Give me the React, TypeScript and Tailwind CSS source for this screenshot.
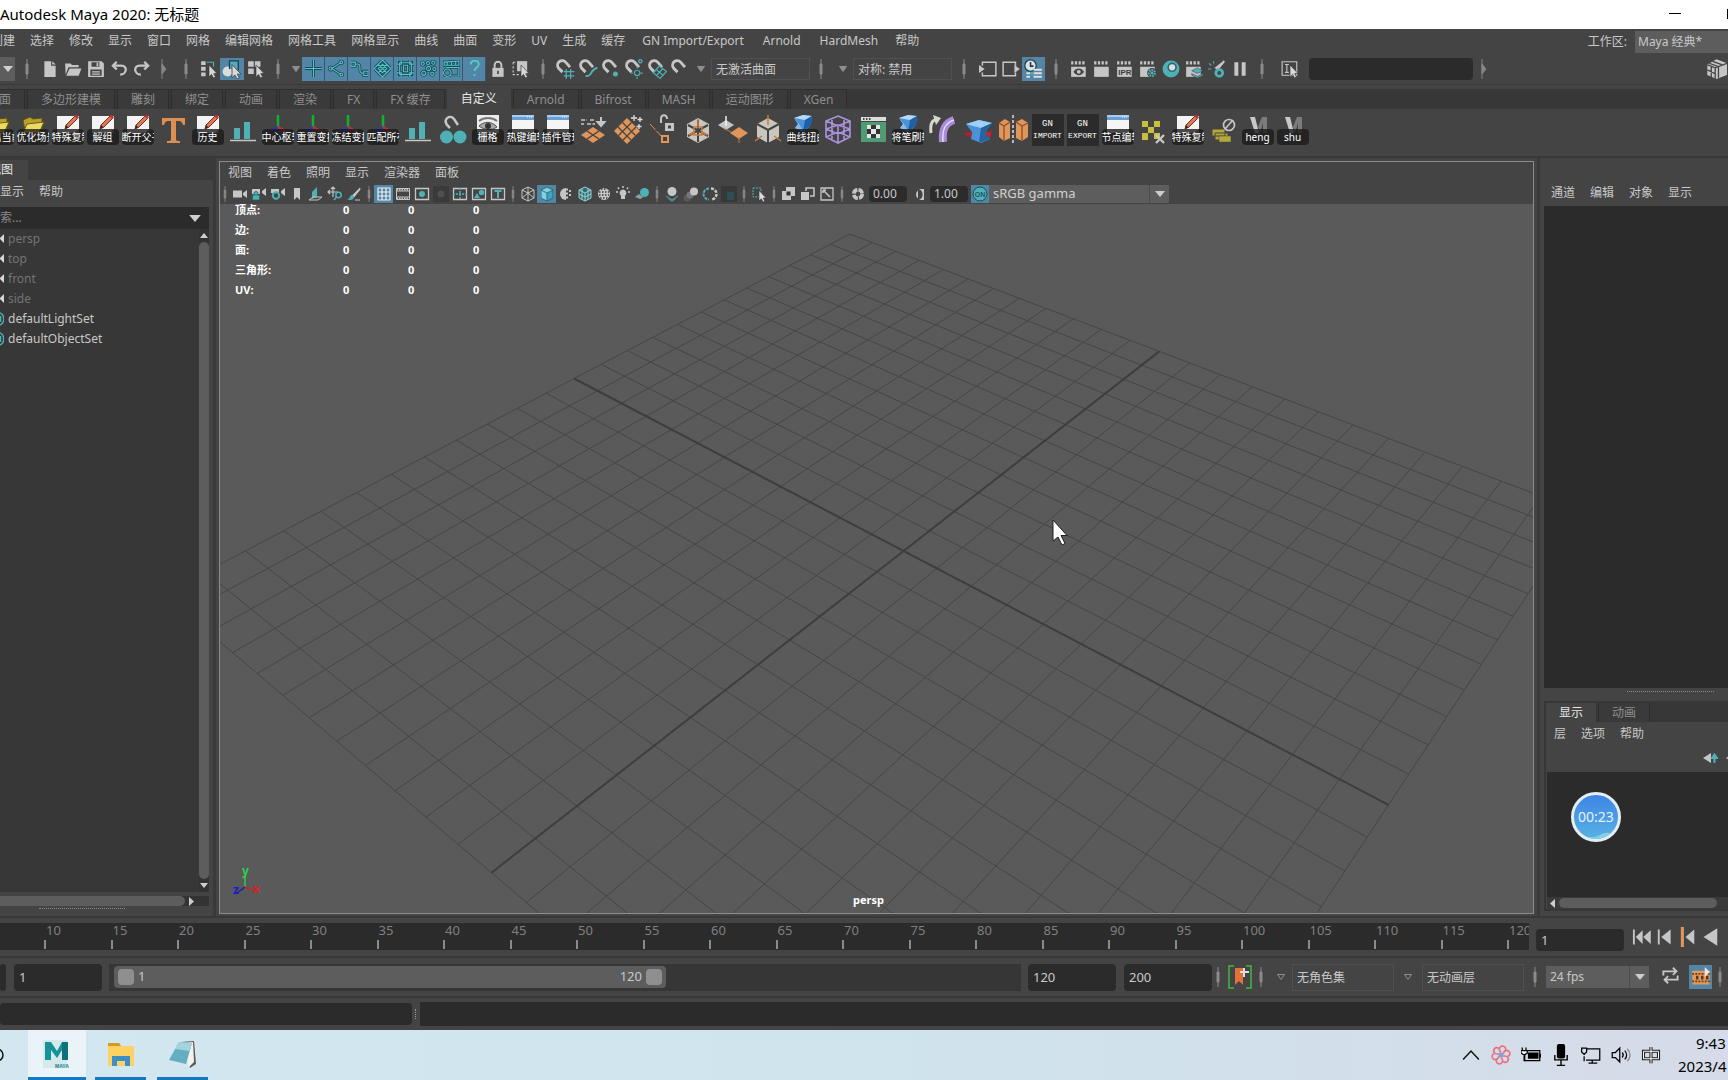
import React from "react";
import type { ReactNode } from "react";

const TEAL = "#4fb0b5";
const LIGHT = "#c6c6c6";
const ORANGE = "#e0955a";

/* ---------- small building blocks ---------- */

function Svg({ size = 16, box = 16, children }: { size?: number; box?: number; children: ReactNode }) {
  return (
    <svg width={size} height={size} viewBox={`0 0 ${box} ${box}`} fill="none" aria-hidden="true" className="block shrink-0">
      {children}
    </svg>
  );
}

function Caret({ className = "" }: { className?: string }) {
  return (
    <svg width="10" height="6" viewBox="0 0 10 6" className={className} aria-hidden="true">
      <path d="M0 0h10L5 6z" fill="#cfcfcf" />
    </svg>
  );
}

function Tool({ label, on = false, className = "w-[23px] h-[22px]", children }: { label: string; on?: boolean; className?: string; children: ReactNode }) {
  return (
    <button type="button" aria-label={label} className={`flex shrink-0 items-center justify-center ${on ? "bg-[#5285a6]" : ""} ${className}`}>
      {children}
    </button>
  );
}

function Sep({ className = "w-[22px] h-[22px]", arrow = false }: { className?: string; arrow?: boolean }) {
  return (
    <span className={`flex shrink-0 items-center justify-center ${className}`} aria-hidden="true">
      <svg width="6" height="20" viewBox="0 0 6 20" className="h-full">
        {arrow ? <path d="M1 0v20M1 5l4 5-4 5z" stroke="#858585" fill="#858585" /> : <path d="M3 0v20M2 5h2v10h-2z" stroke="#8a8a8a" fill="#8a8a8a" />}
      </svg>
    </span>
  );
}

function MiniCaret({ className, outline = false }: { className: string; outline?: boolean }) {
  return (
    <button type="button" aria-label="选项菜单" className={`flex shrink-0 items-center justify-center ${className}`}>
      <svg width="8" height="6" viewBox="0 0 8 6">
        <path d="M.5.5h7L4 5.5z" fill={outline ? "none" : "#8f8f8f"} stroke="#8f8f8f" />
      </svg>
    </button>
  );
}

function Combo({ label, value, className }: { label: string; value: string; className: string }) {
  return (
    <span className={`relative flex shrink-0 items-center bg-[#5d5d5d] ${className}`}>
      <select aria-label={label} defaultValue={value} className="h-full w-full appearance-none bg-transparent pl-1 outline-none">
        <option>{value}</option>
      </select>
      <Caret className="pointer-events-none absolute right-1" />
      <span className="pointer-events-none absolute inset-y-0 right-[19px] w-px bg-[#4b4b4b]" />
    </span>
  );
}

function Field({ label, value, className }: { label: string; value: string; className: string }) {
  return <input aria-label={label} defaultValue={value} className={`shrink-0 rounded-sm bg-[#2b2b2b] text-[#c8c8c8] outline-none ${className}`} />;
}

const cursor = <path d="M8 4.500v10.500l2.300-2.200 1.700 3.200 1.800-.9-1.600-3h3z" fill="#d8d8d8" stroke="#3a3a3a" strokeWidth=".6" />;
const clapper = (
  <>
    <path d="M1 2.500h13" stroke={LIGHT} strokeWidth="3" strokeDasharray="2 1.300" />
    <path d="M1 6h13v9H1z" fill={LIGHT} />
  </>
);
const magnet = <path d="M6 10.500L2.800 7.200A3.700 3.700 0 0 1 8.500 2.500L12 6.500" stroke={LIGHT} strokeWidth="2.300" />;
const cubeLines = "M8 1l6 3v8l-6 3-6-3V4zM2 4l6 3 6-3M8 7v8";

/* ---------- status line ---------- */

const fileIcons: [string, ReactNode][] = [
  ["新建场景", <path d="M3 1h6v4h4v10H3zM10 1l3 3h-3z" fill={LIGHT} />],
  ["打开场景", <path d="M1 3h5l1 1.500h6v2H4L1.500 13zM5 7.500h10.500L13 14H2z" fill={LIGHT} />],
  ["保存场景", <path fillRule="evenodd" d="M1 1h12l2 2v12H1zM4 2v4h7V2zM3 8.500v5.500h10V8.500zM8.500 2.500v3H10v-3zM4.500 10h7v1h-7zM4.500 12h7v1h-7z" fill={LIGHT} />],
  ["撤消", <path d="M3 5h7c6 0 5 8-1 8M6 1.500L2.500 5 6 8.500" stroke={LIGHT} strokeWidth="2" />],
  ["重做", <path d="M13 5H6c-6 0-5 8 1 8M10 1.500L13.500 5 10 8.500" stroke={LIGHT} strokeWidth="2" />],
];

const maskIcons: [string, ReactNode][] = [
  ["控制柄", <path d="M8 0v16M0 8h16" />],
  ["关节", <path d="M12 2.500L3.500 8l8.500 5.500M12.500 1a1.300 1.300 0 1 0 .1 0M2.500 6.500a1.500 1.500 0 1 0 .1 0M12.500 12.500a1.300 1.300 0 1 0 .1 0" />],
  ["曲线", <path d="M0 2h4v4H0zM12 10.500h4v4h-4zM4 4c9-2 0 8.500 8 8.500" />],
  ["曲面", <path d="M8 0l8 8-8 8-8-8zM8 4l4 4-4 4-4-4zM4 4l8 8M12 4l-8 8" />],
  ["变形", <path d="M2.500 2.500h11v11h-11zM0 0h4v4H0zM12 0h4v4h-4zM0 12h4v4H0zM12 12h4v4h-4zM6 5h4v6H6z" />],
  ["动力学", <path d="M2.500 2a1.500 1.500 0 1 0 .1 0M8 6a2 2 0 1 0 .1 0M12.500 1a1.500 1.500 0 1 0 .1 0M13.500 7a1.500 1.500 0 1 0 .1 0M3.500 10.500a2 2 0 1 0 .1 0M11.500 11.500a1.500 1.500 0 1 0 .1 0M7.500 1.500a1.500 1.500 0 1 0 .1 0" />],
  ["渲染", <path d="M1 2l14-1v4H1zM4 2v3M8 1.500v3M12 1.500v3M3 7h12v8H7M4 8.500a3.500 3.500 0 1 0 .1 0" />],
  ["杂项", <path d="M4.500 4.500c0-5 7.500-5 7.500-.5 0 3-4 3-4 6.500M8 13v2.500" strokeWidth="2.400" />],
];

const snapIcons: [string, ReactNode][] = [
  ["捕捉到栅格", <path d="M9 8v8M12.500 8v8M7 10h8.500M7 13.500h8.500" stroke={TEAL} />],
  ["捕捉到曲线", <path d="M6 13.500c6 1 3-5 9.500-6.500" stroke={TEAL} strokeWidth="1.500" />],
  ["捕捉到点", <circle cx="11.500" cy="12" r="2" fill={TEAL} />],
  ["捕捉到投影中心", <path d="M13 .5a1.300 1.300 0 1 0 .1 0M10.500 9a2.200 2.200 0 1 0 .1 0M10.500 6v1.500M10.500 14.500v1.500M13.500 11.300h1.500M5.500 11.300h1.500" stroke={TEAL} />],
  ["捕捉到视图平面", <path d="M10 5.500l5.500 4.500-5 5.500L5 11zM7.500 13.300l5-5.500M7.500 8.500l5 4.300" stroke={TEAL} />],
  ["激活选定对象", null],
];

const renderIcons: [string, ReactNode][] = [
  ["渲染视图", <>{clapper}<path d="M3 10.500c2.500-4 7-4 9.500 0-2.500 4-7 4-9.500 0z" fill="#444" /><circle cx="7.800" cy="10.500" r="1.700" fill={LIGHT} /></>],
  ["渲染当前帧", clapper],
  ["IPR", <>{clapper}<text x="2" y="13.500" fontSize="7" fontWeight="700" fill="#3c3c3c" fontFamily="Liberation Sans">IPR</text></>],
  ["渲染设置", <>{clapper}<circle cx="11.500" cy="11.500" r="4.300" fill="#444" /><circle cx="11.500" cy="11.500" r="2.600" stroke={TEAL} strokeWidth="2" strokeDasharray="1.500 .8" /><circle cx="11.500" cy="11.500" r="1.200" fill={TEAL} /></>],
  ["材质查看器", <><circle cx="8" cy="8" r="7.500" fill={TEAL} /><circle cx="9" cy="6.500" r="3.500" fill="#e0e0e0" stroke="#2d6c76" strokeWidth="1.500" /></>],
  ["渲染序列", <>{clapper}<path d="M11 7l5 2.500-5 2.500-5-2.500zM6 12l5 2.500 5-2.500v1.500L11 16l-5-2.500z" fill={TEAL} stroke="#444" strokeWidth=".5" /></>],
  ["灯光编辑器", <><path d="M14.500 1L9 8 7 7z" fill={LIGHT} stroke={LIGHT} strokeWidth="1.500" /><path d="M1 3l2 2M5 1v2M0 8h3" stroke={TEAL} /><circle cx="10" cy="11.500" r="3" stroke={TEAL} strokeWidth="2.500" /></>],
  ["暂停", <path d="M3 2h3.500v12H3zM9.500 2H13v12H9.500z" fill={LIGHT} />],
];

function StatusLine() {
  return (
    <div className="flex h-8 shrink-0 items-center overflow-hidden border-b border-[#3a3a3a]">
      <button type="button" aria-label="菜单集" className="flex h-6 w-[15px] shrink-0 items-center justify-center bg-[#5d5d5d]"><Caret /></button>
      <Sep className="h-[22px] w-[23px]" />
      {fileIcons.map(([n, d]) => <Tool key={n} label={n}><Svg size={18}>{d}</Svg></Tool>)}
      <Sep arrow />
      <Sep />
      <Tool label="按层次选择"><Svg size={18}><path d="M1 1h4v3.500H1zM1 6h4v3.500H1zM1 11h4v3.500H1z" fill={LIGHT} /><path d="M6 2h6v4" stroke={TEAL} />{cursor}</Svg></Tool>
      <Tool label="按对象选择" on className="h-[22px] w-6"><Svg size={20}><circle cx="4.500" cy="10" r="4" fill="#dcdcdc" /><path d="M6 8V1.500h7V9" stroke="#10424f" fill="#5ea7bb" />{cursor}</Svg></Tool>
      <Tool label="按组件选择"><Svg size={18}><path d="M1 1h5v5H1zM7 1h5v5H7zM1 7.500h5v5H1z" fill={LIGHT} />{cursor}</Svg></Tool>
      <Sep />
      <MiniCaret className="h-[22px] w-[13px]" />
      {maskIcons.map(([n, d]) => (
        <Tool key={n} label={n} on className="h-6 w-[23px] border-r border-[#36576c]">
          <Svg size={17}>
            <g stroke="#174b59" strokeWidth="2.600">{d}</g>
            <g stroke="#5cc0c4" strokeWidth="1">{d}</g>
          </Svg>
        </Tool>
      ))}
      <Tool label="锁定当前选择"><Svg size={18}><path d="M5 7V4.500a3 3 0 0 1 6 0V7" stroke={LIGHT} strokeWidth="1.700" /><path d="M3 7h10v8H3z" fill={LIGHT} /><path d="M8 9.500v3" stroke="#444" strokeWidth="1.500" /></Svg></Tool>
      <Tool label="高亮显示选择模式"><Svg size={18}><path d="M1 2h3M1 2v11h6" stroke={LIGHT} strokeDasharray="2 1.500" /><path d="M4.500 1h9v9h-9z" fill={LIGHT} />{cursor}</Svg></Tool>
      <Sep className="h-[22px] w-[21px]" />
      {snapIcons.map(([n, d]) => <Tool key={n} label={n}><Svg size={20}>{magnet}{d}</Svg></Tool>)}
      <MiniCaret className="h-[22px] w-5" />
      <input aria-label="激活曲面" defaultValue="无激活曲面" className="h-[22px] w-[99px] shrink-0 border border-[#505050] bg-transparent px-1 outline-none" />
      <Sep />
      <MiniCaret className="h-[22px] w-[21px]" />
      <input aria-label="对称" defaultValue="对称: 禁用" className="h-[22px] w-[99px] shrink-0 border border-[#505050] bg-transparent px-1 outline-none" />
      <Sep className="h-[22px] w-6" />
      <Tool label="输入连接"><Svg size={18}><path d="M3 5V2h12v12H3v-3" stroke={LIGHT} strokeWidth="1.300" /><path d="M0 4.500L5 8l-5 3.500z" fill={LIGHT} /></Svg></Tool>
      <Tool label="输出连接"><Svg size={18}><path d="M12 5V2H1v12h11v-3" stroke={LIGHT} strokeWidth="1.300" /><path d="M11 4.500L16 8l-5 3.500z" fill={LIGHT} /></Svg></Tool>
      <Tool label="构建历史" on className="h-6 w-[23px]"><Svg size={19}><circle cx="5.500" cy="5.500" r="4.800" fill="#e0e0e0" stroke="#173b4c" /><path d="M5.500 2.500v3.500H8" stroke="#173b4c" strokeWidth="1.300" /><path d="M8 9h7M8 12h7M8 15h7M2 12h3M2 15h3" stroke="#e0e0e0" strokeWidth="1.600" /><circle cx="7" cy="12" r="1.500" fill={TEAL} /></Svg></Tool>
      <Sep />
      {renderIcons.map(([n, d]) => <Tool key={n} label={n}><Svg size={18}>{d}</Svg></Tool>)}
      <Sep />
      <Tool label="输入行操作" className="h-[22px] w-[34px]"><Svg size={18}><path d="M1 1.500h13v12H1z" stroke={LIGHT} /><path d="M3.500 4H7M5.200 4v7M3.500 11H7" stroke={LIGHT} />{cursor}</Svg></Tool>
      <Field label="按名称选择" value="" className="ml-0.5 h-[22px] w-[164px] px-1" />
      <Sep arrow />
      <span className="grow" />
      <Tool label="建模工具包"><Svg size={21}><path d="M1 5l7-4 8 3v9l-8 3-7-3z" fill={LIGHT} /><path d="M1 5l6 2.500L16 4M7 7.500V16M1 9l6 3M4 6v9M9.500 7v8M2.500 4l7 2.500M5 2.500L12 5" stroke="#444" /></Svg></Tool>
    </div>
  );
}

/* ---------- shelf ---------- */

const tabs = ["曲面", "多边形建模", "雕刻", "绑定", "动画", "渲染", "FX", "FX 缓存", "自定义", "Arnold", "Bifrost", "MASH", "运动图形", "XGen"];

const noteIcon = (
  <>
    <path d="M5 2h22v17H5z" fill="#f3f3f3" />
    <path d="M23 19l4-4v4z" fill="#888" />
    <path d="M13 15l1-4 9-9 3 2-9 9z" fill="#d97a55" stroke="#7a2a20" />
    <path d="M22 2.500l2-2 3 2.500-1.500 2z" fill="#c0343a" />
    <path d="M13 15l1-4 2.500 2.500z" fill="#2c2c2c" />
  </>
);
const axisIcon = (
  <g strokeWidth="2.500">
    <path d="M16 1v12" stroke="#12b02a" />
    <path d="M16 13l-9 5" stroke="#2a35c8" />
    <path d="M16 13l9 5" stroke="#c8283a" />
  </g>
);
const barsFull = <><path d="M7 14h6v11H7zM17 8h6v17h-6z" fill={TEAL} /><path d="M3 26.500h26" stroke={LIGHT} strokeWidth="1.500" /></>;
const windowIcon = <><path d="M5 1h22v18H5z" fill="#f5f5f5" /><path d="M5 1h22v5H5z" fill="#6a9fd6" /><path d="M5 1h22v2H5z" fill="#a9cdef" /><path d="M20 3h5" stroke="#fff" strokeDasharray="1 1" /></>;
const folderFull = (
  <>
    <path d="M6 6l7-3 3 2 9-1v11l-6 5-11-3z" fill="#b9a02c" stroke="#5f5212" />
    <path d="M6 19l4-9 17-2-5 11z" fill="#ecd961" stroke="#6d5e14" />
  </>
);
const blueGem = <><path d="M7 4l9-3 9 1-1 9-7 7-9-4 3-4z" fill="#4b92d8" /><path d="M7 4l11 2 7-4-9-1z" fill="#b5daf7" /><path d="M18 6l-2 12 8-7 1-9z" fill="#1f5fa8" /><path d="M7 4l4 6-3 4 9 4-5-8z" fill="#86bdec" /></>;
const mIcon = <><path d="M8 3h5l4 16h-4z" fill="#c9c9c9" /><path d="M20 3h5v16h-4V9l-3 10-2-6z" fill="#7b7b7b" /></>;
const greyCube = <path d="M16 4l11 6v13l-11 6-11-6V10z" fill="#c9c6c0" />;

type ShelfItem = { id: string; label?: string; art: ReactNode; text?: [string, string] };

const shelf: ShelfItem[] = [
  { id: "exp", label: "导出当前", art: folderFull },
  { id: "opt", label: "优化场景", art: folderFull },
  { id: "dup", label: "特殊复制", art: noteIcon },
  { id: "ungroup", label: "解组", art: noteIcon },
  { id: "unparent", label: "断开父子", art: noteIcon },
  { id: "type", art: <path d="M5 4h23v7h-2c-1-3-2-4-4-4h-3v18c0 2 1 2 4 2v2H10v-2c3 0 4 0 4-2V7h-3c-2 0-3 1-4 4H5z" fill="#dd8f52" /> },
  { id: "hist", label: "历史", art: noteIcon },
  { id: "bars1", art: barsFull },
  { id: "pivot", label: "中心枢轴", art: axisIcon },
  { id: "reset", label: "重置变换", art: axisIcon },
  { id: "freeze", label: "冻结变换", art: axisIcon },
  { id: "match", label: "匹配所有", art: axisIcon },
  { id: "bars2", art: barsFull },
  { id: "snap", art: <><path d="M13 14l-3-3C6 5 13 0 17 5l4 6" stroke={LIGHT} strokeWidth="2.500" /><circle cx="9.500" cy="23" r="6.500" fill={TEAL} /><circle cx="23" cy="23" r="6.500" fill={TEAL} /></> },
  { id: "grid", label: "栅格", art: <><path d="M5 1h22v18H5z" fill="#ececec" /><path d="M7 7c5-4 13-4 18 0" stroke="#777" strokeWidth="2" /><path d="M7 12c5-5 13-5 18 1-6 4-13 3-18-1z" fill="#a8a8a8" stroke="#555" /><circle cx="16" cy="12" r="3" fill="#333" /></> },
  { id: "hotkey", label: "热键编辑", art: windowIcon },
  { id: "plugin", label: "插件管理", art: windowIcon },
  { id: "smooth", art: <><path d="M4 6h6M13 6h5M4 10h3M10 10h8" stroke={LIGHT} strokeWidth="1.700" strokeDasharray="4 1.500" /><path d="M24 3v5M20.500 8h7l-3.500 4z" stroke={LIGHT} fill={LIGHT} strokeWidth="2" /><path d="M16 13l12 8-12 8-12-8z" fill={ORANGE} /><path d="M10 17l12 8M22 17l-12 8" stroke="#444" strokeWidth="1.500" /></> },
  { id: "retopo", art: <><path d="M15 4l13 13-13 13L2 17z" fill={ORANGE} /><path d="M10.500 8.500l13 13M6 13l13 13M19.500 8.500l-13 13M24 13L11 26" stroke="#444" strokeWidth="1.300" /><path d="M22 1v6M19 4h6M28 3v5M25.500 5.500h5M27 10v5M24.500 12.500h5" stroke="#ddd" strokeWidth="1.300" /></> },
  { id: "unlock", art: <><path d="M14 9V5c0-5 6-5 6 0" stroke={LIGHT} strokeWidth="2" /><path d="M18 9h9v8h-9z" fill={LIGHT} /><path d="M21 11.500h3v3h-3z" fill="#444" /><path d="M3 10l13 14" stroke={ORANGE} strokeDasharray="8 1.500" /><path d="M15 22h6v6h-6z" stroke={ORANGE} strokeWidth="2" /></> },
  { id: "cube1", art: <>{greyCube}<path d="M16 6v22M6 11l20 11M26 11L6 22" stroke="#444" strokeWidth="2" /><path d="M16 5v7M7 21l6-3M25 21l-6-3M12 13h8v8h-8z" stroke="#c67b3c" strokeWidth="1.500" /></> },
  { id: "plane", art: <><path d="M1 11l8-5 8 5-8 5z" fill={LIGHT} /><path d="M9 2v10" stroke="#eee" strokeWidth="1.500" /><path d="M13 19l9-6 9 6-9 6z" fill={ORANGE} /><path d="M22 23v6M6 14l8 4" stroke="#c67b3c" /></> },
  { id: "cube2", art: <>{greyCube}<path d="M5 10l11 6 11-6M16 16v13" stroke="#444" strokeWidth="2" /><path d="M16 1v10M3 27l7-5M29 27l-7-5" stroke="#c67b3c" strokeWidth="1.500" /></> },
  { id: "twist", label: "曲线扭曲", art: blueGem },
  { id: "lattice", art: <path d="M16 2l12 5v16l-12 6-12-6V7zM4 7l12 5 12-5M16 12v17M4 15l12 5 12-5M4 15l12-4 12 4M4 23l12-5 12 5M10 4.500v5M22 4.500v5M10 9.500v16.500M22 9.500v16.500" stroke="#ab92dc" strokeWidth="1.600" /> },
  { id: "checker", art: <><path d="M4 3h25v4H4z" fill="#dcdcdc" /><path d="M6 5h8" stroke="#444" strokeDasharray="1.500 1.500" strokeWidth="2" /><path d="M4 8h25v20H4z" fill="#4f9b74" /><path d="M10 11h13v13H10z" fill="#e5e5e5" /><path d="M14 11h5v4h-5zM10 15h4v5h-4zM19 15h4v5h-4zM14 20h5v4h-5z" fill="#333" /></> },
  { id: "brush", label: "将笔刷转", art: blueGem },
  { id: "bend", art: <><path d="M4 19C3 10 5 6 9 6" stroke="#d8d8d0" strokeWidth="3" /><path d="M6 1l8 3-5 7z" fill="#d8d8d0" /><path d="M16 28c-1-11 1-19 11-22" stroke="#a98bdc" strokeWidth="8" /><path d="M16 28c-1-11 1-19 11-22" stroke="#e6dcf8" strokeWidth="1.500" /></> },
  { id: "deform", art: <><path d="M2 20l7-3v7zM30 16l-8 5 6 3z" fill="#b3202c" /><path d="M4 10l13-4 13 3-6 8 4 8-9 4-10-4 1-7z" fill="#4b92d8" /><path d="M4 10l15 4 11-5-13-3z" fill="#9fd0f5" /><path d="M19 14l-2 15 11-4-4-8 6-8z" fill="#26649f" /><path d="M24 20h5M26.500 18v5" stroke="#d3202c" strokeWidth="2" /></> },
  { id: "split", art: <><path d="M2 9l6-4 5 3v16l-6 3-5-4zM19 8l6-3 6 4v14l-6 4-6-3z" fill={ORANGE} /><path d="M2 9l5 3 6-4M7 12v15M19 8l6 4 6-3M25 12v15" stroke="#8b5124" strokeWidth="1.300" /><path d="M16 1v28" stroke="#ddd" strokeDasharray="3 2" strokeWidth="1.500" /></> },
  { id: "gni", text: ["GN", "IMPORT"], art: null },
  { id: "gne", text: ["GN", "EXPORT"], art: null },
  { id: "node", label: "节点编辑", art: windowIcon },
  { id: "uv", art: <><path d="M5 7h6v6H5zM17 7h6v6h-6zM11 13h6v6h-6zM5 19h6v7H5zM17 19h6v6h-6z" fill="#c9bf3e" /><path d="M19 21l8 8M27 21l-8 8" stroke="#c9c9c9" strokeWidth="2.300" /></> },
  { id: "dup2", label: "特殊复制", art: noteIcon },
  { id: "layers", art: <><path d="M5 15h13v7H5zM8 19h13v7H8z" fill="#b4a938" stroke="#444" /><path d="M12 22h12v6H12z" fill="#b4a938" stroke="#444" strokeWidth=".5" /><circle cx="22" cy="11" r="5.500" stroke={LIGHT} strokeWidth="1.700" /><path d="M18 15l8-9" stroke={LIGHT} strokeWidth="1.700" /></> },
  { id: "heng", label: "heng", art: mIcon },
  { id: "shu", label: "shu", art: mIcon },
];

const longLabel = /[\u4e00-\u9fff]{4}/;

function Shelf() {
  return (
    <>
      <div role="tablist" className="mt-1 flex h-5 shrink-0 gap-0.5 overflow-hidden bg-[#373737]">
        {tabs.map((t, i) => (
          <button
            key={t}
            type="button"
            role="tab"
            aria-selected={t === "自定义"}
            className={`h-full shrink-0 whitespace-nowrap ${i === 0 ? "-ml-[27px]" : ""} ${t === "自定义" ? "bg-[#444444] px-3.5 text-[#e6e6e6]" : "border-x border-t border-[#2e2e2e] bg-[#3a3a3a] px-[13px] text-[#8f8f8f]"}`}
          >
            {t}
          </button>
        ))}
      </div>
      <div className="-ml-5 flex h-[49px] shrink-0 items-start overflow-hidden border-b-2 border-[#383838] pt-[5px]">
        {shelf.map((s) => (
          <button key={s.id} type="button" aria-label={s.label ?? s.id} className="flex w-[35px] shrink-0 justify-center">
            {s.text ? (
              <span className="flex h-8 w-8 flex-col items-center justify-center bg-[#2b2b2b] font-['Liberation_Mono'] text-[9px] leading-[11px] text-white">
                <span>{s.text[0]}</span>
                <span className="text-[8px]">{s.text[1]}</span>
              </span>
            ) : (
              <span className="grid w-8 grid-cols-1 grid-rows-1">
                <span className="col-start-1 row-start-1"><Svg size={32} box={32}>{s.art}</Svg></span>
                {s.label && (
                  <span className={`z-10 col-start-1 row-start-1 mt-[15px] flex h-4 overflow-hidden whitespace-nowrap rounded-sm bg-[#1c1c1ccc] text-[10px] leading-4 text-white ${longLabel.test(s.label) ? "" : "justify-center"}`}>
                    {s.label}
                  </span>
                )}
              </span>
            )}
          </button>
        ))}
      </div>
    </>
  );
}

/* ---------- outliner ---------- */

const nodes = [
  { name: "persp", set: false },
  { name: "top", set: false },
  { name: "front", set: false },
  { name: "side", set: false },
  { name: "defaultLightSet", set: true },
  { name: "defaultObjectSet", set: true },
];

function Dots({ className }: { className: string }) {
  return <div className={`h-0.5 border-t border-dotted border-[#8a8a8a] ${className}`} />;
}

function Outliner() {
  return (
    <aside className="flex w-[213px] shrink-0 flex-col overflow-hidden bg-[#444444]">
      <div className="flex h-[22px] items-end bg-[#3a3a3a]">
        <span className="flex h-5 w-7 items-center overflow-hidden whitespace-nowrap bg-[#444444] text-[#e6e6e6]"><span className="-ml-[35px]">大纲视图</span></span>
      </div>
      <nav className="flex h-[27px] items-center gap-[15px] pb-1">
        <button type="button">显示</button>
        <button type="button">帮助</button>
      </nav>
      <div className="mr-1 flex h-[22px] items-center justify-between bg-[#2b2b2b] pr-2">
        <input aria-label="搜索" placeholder="搜索..." className="-ml-3 w-40 bg-transparent placeholder:text-[#8a8a8a] outline-none" />
        <Caret className="h-[7px] w-3" />
      </div>
      <div className="mr-1 flex grow bg-[#373737]">
        <ul className="grow">
          {nodes.map((n) => (
            <li key={n.name} className={`flex h-5 items-center gap-1 ${n.set ? "text-[#c8c8c8]" : "text-[#747474]"}`}>
              <svg width="4" height="14" viewBox="0 0 4 14" aria-hidden="true">
                {n.set ? <path d="M0 1c5 2 5 10 0 12M.5 4v6" stroke={TEAL} fill="none" strokeWidth="1.500" /> : <path d="M4 2v9L0 7V6z" fill="#d8d8d8" />}
              </svg>
              {n.name}
            </li>
          ))}
        </ul>
        <div className="flex w-2.5 flex-col items-center gap-1 bg-[#333333] py-1">
          <Caret className="h-[5px] w-2 rotate-180" />
          <span className="w-2.5 grow rounded-md bg-[#5d5d5d]" />
          <Caret className="h-[5px] w-2" />
        </div>
      </div>
      <div className="mr-1 mt-1 flex h-2.5 items-center gap-1 bg-[#333333]">
        <span className="h-full w-[185px] rounded-r-md bg-[#5d5d5d]" />
        <svg width="5" height="9" viewBox="0 0 5 9"><path d="M0 0v9l5-4.500z" fill="#cfcfcf" /></svg>
      </div>
      <Dots className="mb-1.5 ml-[39px] mt-0.5 w-[86px]" />
    </aside>
  );
}

/* ---------- viewport ---------- */

const frame = <path d="M1.500 2.500h13v11h-13z" stroke={LIGHT} strokeWidth="1.300" />;

const panelGroups: [string, boolean, ReactNode][][] = [
  [
    ["选择摄影机", false, <path d="M1 4.500h9v7H1zM11 7l4-3v8l-4-3z" fill={LIGHT} />],
    ["锁定摄影机", false, <><path d="M1 3h8v5H1zM11 5l4-3v8l-4-3z" fill={LIGHT} /><path d="M3 9V7.500a2 2 0 0 1 4 0V9M1.500 9h7v5h-7z" fill={TEAL} stroke="#2b5e62" strokeWidth=".8" /></>],
    ["摄影机属性", false, <><path d="M1 3h8v4H1zM11 5l4-3v8l-4-3z" fill={LIGHT} /><circle cx="6" cy="9.500" r="3.200" stroke={TEAL} strokeWidth="2" /></>],
    ["书签", false, <path d="M5 2h6v12l-3-3-3 3z" fill={LIGHT} />],
    ["图像平面", false, <><path d="M9 1v10l-5 2V6z" fill={TEAL} /><path d="M1 14l4-3h9l-4 3z" stroke={LIGHT} /></>],
    ["二维平移/缩放", false, <><path d="M6 1v10M1 6h10M4 3l2-2 2 2M3 4L1 6l2 2" stroke={LIGHT} strokeWidth="1.200" /><circle cx="11.500" cy="9" r="2.700" stroke={TEAL} strokeWidth="1.500" /><path d="M9.500 11L7 14" stroke={TEAL} strokeWidth="1.500" /></>],
    ["油性铅笔", false, <><path d="M14 1.500L6 9.500l2 2 6.500-8z" fill={LIGHT} /><path d="M6 9c-3 0-1 4-5 4 3 2 7 1 7-2z" fill={TEAL} /><path d="M9 14h5" stroke={LIGHT} /></>],
  ],
  [
    ["栅格", true, <path d="M2 2h12v12H2zM6 2v12M10 2v12M2 6h12M2 10h12" stroke="#f0f0f0" strokeWidth="1.200" />],
    ["胶片门", false, <><path d="M1.500 2.500h13v11h-13z" stroke={LIGHT} /><path d="M1.500 3.500h13M1.500 12.500h13" stroke={LIGHT} strokeWidth="2" strokeDasharray="1.500 1" /><path d="M1.500 5h13M1.500 11h13" stroke={LIGHT} /></>],
    ["分辨率门", false, <>{frame}<circle cx="8" cy="8" r="3" fill={TEAL} /></>],
    ["门遮罩", false, <><path d="M0 0h16v16H0z" fill="#3a3a3a" /><circle cx="8" cy="8" r="3.500" fill="#4f4f4f" /></>],
    ["区域图", false, <>{frame}<path d="M1 8h14M8 2v12" stroke={TEAL} strokeWidth="1.500" strokeDasharray="2 1" /></>],
    ["安全动作", false, <>{frame}<circle cx="10.500" cy="6.500" r="2.700" fill={TEAL} /><path d="M3 12l3-5 3 5z" fill={TEAL} /></>],
    ["安全标题", false, <>{frame}<path d="M4.500 5h7M8 5v7" stroke={TEAL} strokeWidth="2" /></>],
  ],
  [
    ["线框", false, <path d={cubeLines + "M8 1v6M2 12l6-5 6 5"} stroke={LIGHT} />],
    ["平滑着色", true, <><path d="M8 1l6.500 3v8L8 15l-6.500-3V4z" fill="#7fd0e0" /><path d="M8 7v8l6.500-3V4z" fill="#3fa5bd" /><path d={cubeLines} stroke="#1a4a5a" strokeWidth=".7" /></>],
    ["默认材质", false, <><path d="M8 2a6 6 0 0 0 0 12z" fill={LIGHT} /><path d="M9 2.500v11M12 4v8" stroke={LIGHT} strokeWidth="2" strokeDasharray="2 2" /></>],
    ["着色对象上的线框", false, <><path d="M8 1l6 3v8l-6 3-6-3V4z" fill="#2f6d72" /><path d={cubeLines + "M5 2.500v11M11 2.500v11M2 8l6 3 6-3"} stroke="#a9dadd" strokeWidth=".9" /></>],
    ["带纹理", false, <><circle cx="8" cy="8" r="6" fill={LIGHT} /><path d="M5 3h6M3 6h10M3 9h10M4 12h8" stroke="#3c3c3c" strokeDasharray="1.500 1.500" strokeWidth="1.500" /></>],
    ["使用所有灯光", false, <><path d="M8 3.500a3.500 3.500 0 0 1 2 6.300V13H6V9.800a3.500 3.500 0 0 1 2-6.300z" fill={LIGHT} /><path d="M8 0v2M1 6h2M13 6h2M3 1.500l1 1.500M13 1.500L12 3" stroke={LIGHT} strokeWidth="1.500" /></>],
    ["阴影", false, <><circle cx="10.500" cy="6.500" r="4.500" fill={TEAL} /><path d="M5 8l-4 3 5 2 3-1.500" fill="#86a5a6" /></>],
  ],
  [
    ["屏幕空间环境光遮挡", false, <><circle cx="8" cy="5.500" r="4.500" fill={LIGHT} /><path d="M2 10l6 4 6-4M4 12l4 3 4-3" stroke="#4a8b90" strokeWidth="1.300" /></>],
    ["运动模糊", false, <><circle cx="4" cy="12" r="3.500" fill="#5a5a5a" /><circle cx="7" cy="9" r="3.500" fill="#777" /><circle cx="11" cy="5.500" r="4" fill={LIGHT} /></>],
    ["多采样抗锯齿", false, <><path d="M7 2.500a5.500 5.500 0 0 0 0 11" stroke={TEAL} strokeWidth="2" strokeDasharray="3 1" /><path d="M9 2.500a5.500 5.500 0 0 1 0 11" stroke={LIGHT} strokeWidth="2.500" strokeDasharray="3 1.200" /></>],
    ["景深", false, <><path d="M0 0h16v16H0z" fill="#383838" /><path d="M6 6h7v8H6z" fill="#2f5053" /></>],
  ],
  [["隔离选择", false, <><path d="M2 2h8v9H2z" stroke={TEAL} strokeDasharray="2 1" />{cursor}</>]],
  [
    ["X射线显示", false, <><path d="M1 5h9v9H1zM5 1h9v9H5z" fill={LIGHT} /><path d="M5.500 5.500h4v4h-4z" fill="#333" /></>],
    ["X射线显示活动组件", false, <><path d="M1 6h8v8H1z" fill={LIGHT} /><path d="M6 5V2h8v8h-4" stroke={LIGHT} strokeWidth="1.500" /></>],
    ["X射线显示关节", false, <><path d="M2 2h12v12H2z" stroke={LIGHT} strokeWidth="1.300" /><path d="M5 5l6 6M4 4h3M4 4v3" stroke={LIGHT} strokeWidth="1.500" /></>],
  ],
];

/* Ground plane of 24 x 24 cells seen from the persp camera. */
function project(u: number, v: number): [number, number] {
  const w = 1 - 0.1908 * u - 0.2343 * v;
  const x = (199.6 * u - 478.5 * v + 820) / w;
  const y = (91 * u + 106.4 * v + 500) / w;
  return [x * 1.102 - 220, y * 1.102 - 204];
}

function segment(a: [number, number], b: [number, number]) {
  return `M${a[0].toFixed(1)} ${a[1].toFixed(1)}L${b[0].toFixed(1)} ${b[1].toFixed(1)}`;
}

const steps = Array.from({ length: 25 }, (_, i) => i / 12 - 1);
const gridPath = steps.map((t) => segment(project(t, -1), project(t, 1)) + segment(project(-1, t), project(1, t))).join("");
const axisPath = segment(project(0, -1), project(0, 1)) + segment(project(-1, 0), project(1, 0));

const stats = ["顶点:", "边:", "面:", "三角形:", "UV:"];

function Viewport() {
  const cell = "h-[18px] w-[19px]";
  return (
    <section className="mt-[3px] mb-0.5 flex min-w-0 grow flex-col border border-[#8c8c8c] bg-[#444444]">
      <nav className="flex h-[22px] shrink-0 items-center gap-[15px] pl-2">
        {["视图", "着色", "照明", "显示", "渲染器", "面板"].map((m) => <button key={m} type="button">{m}</button>)}
      </nav>
      <div className="flex h-5 shrink-0 items-center overflow-hidden">
        {panelGroups.map((g, gi) => (
          <div key={gi} className="flex items-center">
            <Sep className={gi === 0 ? "h-4 w-2.5" : "h-4 w-[11px]"} />
            {g.map(([n, on, d]) => <Tool key={n} label={n} on={on} className={cell}><Svg size={16}>{d}</Svg></Tool>)}
          </div>
        ))}
        <Sep className="h-4 w-[11px]" />
        <Tool label="曝光" className="h-[18px] w-[22px]"><Svg size={16}><circle cx="8" cy="8" r="4.200" stroke={LIGHT} strokeWidth="3.600" strokeDasharray="5.400 1.200" /></Svg></Tool>
        <Field label="曝光值" value="0.00" className="h-4 w-[38px] pl-1" />
        <Tool label="对比度" className="h-[18px] w-[23px]"><Svg size={16}><path d="M8 3h5v11H8a6 6 0 0 0 0-11z" fill={LIGHT} /><path d="M7 4.500a5 5 0 0 0 0 8z" fill={LIGHT} /></Svg></Tool>
        <Field label="伽马值" value="1.00" className="h-4 w-[38px] pl-1" />
        <Tool label="视图变换" on className="ml-[3px] h-[18px] w-[18px]"><Svg size={16}><circle cx="8" cy="8" r="7" fill={TEAL} stroke="#1a4a5a" /><text x="8" y="10.500" textAnchor="middle" fontSize="7" fontWeight="700" fill="#1f5560" fontFamily="Liberation Sans">ON</text></Svg></Tool>
        <Combo label="颜色空间" value="sRGB gamma" className="h-[18px] w-[180px] text-[13px] text-[#d0d0d0]" />
      </div>
      <div className="relative grow overflow-hidden bg-[#5a5a5a]">
        <svg className="absolute inset-0 h-full w-full" viewBox="0 0 1313 709" preserveAspectRatio="xMidYMid slice" fill="none" aria-hidden="true">
          <path d={gridPath} stroke="#464646" strokeWidth="1" />
          <path d={axisPath} stroke="#3e3e3e" strokeWidth="2" />
          <path d="M25 683v-13" stroke="#2fd04a" strokeWidth="1.500" />
          <path d="M25 683l-8 6" stroke="#1a1ab8" strokeWidth="1.500" />
          <path d="M25 683l11 4" stroke="#c62828" strokeWidth="1.500" />
          <g fontSize="12" fontWeight="700" fontFamily="Noto Sans">
            <text x="22" y="671" fill="#2fd04a">y</text>
            <text x="33" y="689" fill="#d62222">x</text>
            <text x="13" y="690" fill="#1a1ad0">z</text>
          </g>
          <path d="M833 316v21l5-4 4 8 3-1.500-4-8h6z" fill="#fff" stroke="#222" />
        </svg>
        <dl className="relative -mt-1 ml-[15px] text-[11px] font-bold text-white">
          {stats.map((s) => (
            <div key={s} className="flex h-5 items-center">
              <dt className="w-[108px]">{s}</dt>
              <dd className="w-[65px]">0</dd>
              <dd className="w-[65px]">0</dd>
              <dd>0</dd>
            </div>
          ))}
        </dl>
        <span className="absolute bottom-[5px] left-[633px] text-[11px] font-bold text-white">persp</span>
      </div>
    </section>
  );
}

/* ---------- channel box and layers ---------- */

function RightPanel() {
  return (
    <aside className="flex w-[184px] shrink-0 flex-col overflow-hidden bg-[#444444]">
      <nav className="flex h-12 items-end gap-[15px] whitespace-nowrap pb-[5px] pl-[7px]">
        {["通道", "编辑", "对象", "显示"].map((m) => <button key={m} type="button">{m}</button>)}
      </nav>
      <div className="grow bg-[#2b2b2b]" />
      <Dots className="ml-[83px] mt-[3px] w-[87px]" />
      <div className="mt-2 mb-[5px] flex h-[210px] shrink-0 flex-col border-2 border-r-0 border-[#373737]">
        <div role="tablist" className="flex h-[19px] shrink-0 gap-0.5 bg-[#373737]">
          <button type="button" role="tab" aria-selected="true" className="w-[50px] bg-[#444444] text-[#e6e6e6]">显示</button>
          <button type="button" role="tab" aria-selected="false" className="w-[52px] border-x border-[#2e2e2e] bg-[#3a3a3a] text-[#8f8f8f]">动画</button>
        </div>
        <nav className="flex h-6 shrink-0 items-center gap-[15px] pl-2">
          {["层", "选项", "帮助"].map((m) => <button key={m} type="button">{m}</button>)}
        </nav>
        <div className="flex h-[26px] shrink-0 items-center gap-2 overflow-hidden pb-0.5 pl-[157px]">
          <button type="button" aria-label="上移层" className="shrink-0"><svg width="15" height="10" viewBox="0 0 15 10"><path d="M0 5l8-5v10z" fill={LIGHT} /><path d="M11.500 10V5H9l2.500-3.500L14 5h-2.500" fill={TEAL} stroke={TEAL} strokeWidth="2" /></svg></button>
          <button type="button" aria-label="下移层" className="shrink-0"><svg width="15" height="10" viewBox="0 0 15 10"><path d="M0 5l8-5v10z" fill={LIGHT} /></svg></button>
        </div>
        <div className="relative ml-[1px] grow bg-[#2b2b2b]">
          <div className="absolute left-6 top-5 flex h-[50px] w-[50px] items-center justify-center overflow-hidden rounded-full border-[3px] border-[#e4eef6] bg-linear-to-b from-[#3f84e6] to-[#58b2e2] text-sm text-[#e8f2fa]">
            <span>00:23</span>
            <svg width="44" height="8" viewBox="0 0 44 8" className="absolute bottom-0 left-0"><path d="M0 8c10-3 20 0 26-4s14-2 18 0v4z" fill="#86cfe4" /></svg>
          </div>
        </div>
        <div className="ml-[1px] flex h-3 shrink-0 items-center gap-1 bg-[#3a3a3a] pl-[3px]">
          <svg width="5" height="9" viewBox="0 0 5 9"><path d="M5 0v9L0 4.500z" fill="#cfcfcf" /></svg>
          <span className="mr-[11px] h-2.5 grow rounded-md bg-[#5d5d5d]" />
        </div>
      </div>
    </aside>
  );
}

/* ---------- playback ---------- */

const ticks = Array.from({ length: 22 }, (_, i) => 10 + i * 5);

function Tick({ n, className }: { n: number; className: string }) {
  return (
    <div className={`flex flex-col overflow-hidden ${className}`}>
      <span className="pl-0.5 text-[13px] leading-[14px] text-[#808080]">{n}</span>
      <span className="mt-[3px] h-[9px] w-0.5 bg-[#8a8a8a]" />
    </div>
  );
}

function Playback() {
  return (
    <>
      <div className="flex h-10 shrink-0 items-start border-b-2 border-[#383838] pt-[5px]">
        <div className="flex h-[27px] min-w-0 grow overflow-hidden bg-[#2b2b2b] pl-11">
          {ticks.map((n) => <Tick key={n} n={n} className="flex-1" />)}
          <Tick n={120} className="w-[22px] shrink-0" />
        </div>
        <Field label="当前帧" value="1" className="ml-[7px] mt-1.5 h-[22px] w-[88px] pl-[5px] text-[13px]" />
        <div className="ml-1.5 mt-[3px] flex w-[98px] shrink-0 overflow-hidden">
          <Tool label="转至播放范围开头"><Svg size={20}><path d="M1.500 2v12" stroke={LIGHT} strokeWidth="1.500" /><path d="M8.500 2.500v11L3 8zM15 2.500v11L9 8z" fill={LIGHT} /></Svg></Tool>
          <Tool label="后退一帧"><Svg size={20}><path d="M3 2v12" stroke={LIGHT} strokeWidth="1.500" /><path d="M12.500 2v12L5 8z" fill={LIGHT} /></Svg></Tool>
          <Tool label="后退到前一关键帧"><Svg size={20}><path d="M3.500 0v16" stroke={ORANGE} strokeWidth="2.500" /><path d="M13 2v12L6 8z" fill={LIGHT} /></Svg></Tool>
          <Tool label="向后播放"><Svg size={20}><path d="M13 1v14L2 8z" fill={LIGHT} /></Svg></Tool>
        </div>
      </div>
      <div className="flex h-10 shrink-0 items-center overflow-hidden border-b-2 border-[#383838] text-[13px]">
        <Field label="动画开始时间" value="" className="h-[27px] w-1.5" />
        <Field label="播放开始时间" value="1" className="ml-2 h-[27px] w-[88px] pl-[5px]" />
        <div className="ml-[7px] flex h-[27px] min-w-0 grow items-center bg-[#363636] pl-[5px]">
          <div className="flex h-[22px] w-[552px] items-center justify-between rounded-sm bg-[#5d5d5d] px-1 text-[#c8c8c8]">
            <span className="flex items-center gap-1"><i className="h-4 w-4 rounded-sm bg-[#8f8f8f]" />1</span>
            <span className="flex items-center gap-1">120<i className="h-4 w-4 rounded-sm bg-[#8f8f8f]" /></span>
          </div>
        </div>
        <Field label="播放结束时间" value="120" className="ml-[7px] h-[27px] w-[88px] pl-[5px]" />
        <Field label="动画结束时间" value="200" className="ml-2 h-[27px] w-[88px] pl-[5px]" />
        <Sep className="h-[22px] w-3" />
        <Tool label="时间滑块书签" className="ml-1 h-6 w-6">
          <Svg size={24} box={24}><path d="M6 1H1v22h5M18 1h5v22h-5" stroke="#3fb83f" strokeWidth="1.500" /><path d="M7 3h8v17l-4-4-4 4z" fill="#e0713a" /><path d="M16 3v9M12 7h9" stroke="#dedede" strokeWidth="2" /></Svg>
        </Tool>
        <Sep className="h-[22px] w-[18px]" />
        <MiniCaret outline className="h-6 w-[22px]" />
        <input aria-label="角色集" defaultValue="无角色集" className="h-[27px] w-[102px] shrink-0 border border-[#505050] px-1 text-xs outline-none" />
        <MiniCaret outline className="h-6 w-7" />
        <input aria-label="动画层" defaultValue="无动画层" className="h-[27px] w-[102px] shrink-0 border border-[#505050] px-1 text-xs outline-none" />
        <Sep className="h-[22px] w-[22px]" />
        <Combo label="帧速率" value="24 fps" className="h-[22px] w-[103px] text-xs" />
        <Tool label="循环播放" className="ml-2.5 h-6 w-[23px] pb-1"><Svg size={19}><path d="M2 8V4.500h10M14 8v3.500H4M10 1.500l3 3-3 3M6 8.500l-3 3 3 3" stroke={LIGHT} strokeWidth="1.600" /></Svg></Tool>
        <Tool label="缓存播放" on className="ml-[7px] h-6 w-[23px]"><Svg size={20}><path d="M1 3h14v11H1z" fill="#e09a5e" /><path d="M1 5.500h14M1 11.500h14" stroke="#6d3b14" strokeDasharray="1.500 1" strokeWidth="1.500" /><path d="M4 7h2v3H4zM8 7h2v3H8zM12 7h2v3h-2z" fill="#5a381f" /><path d="M11 0l4 4-4 4z" fill="#e8e8e8" /></Svg></Tool>
        <Sep className="h-[22px] w-4" />
      </div>
      <div className="flex h-8 shrink-0 items-center">
        <Field label="命令行" value="" className="h-[22px] w-[412px] px-1" />
        <span className="mx-[3px] h-2.5 w-0.5 border-l border-dotted border-[#999]" />
        <div className="h-6 grow bg-[#2b2b2b]" />
      </div>
    </>
  );
}

/* ---------- desktop taskbar ---------- */

function Taskbar() {
  return (
    <footer className="flex h-[50px] shrink-0 items-stretch overflow-hidden bg-linear-to-r from-[#d2e7f0] via-[#cfe4ec] to-[#d5dbe8] text-black">
      <button type="button" aria-label="搜索" className="flex w-7 shrink-0 items-center">
        <svg width="5" height="16" viewBox="0 0 5 16"><path d="M-3 2a6 6 0 0 1 0 12" stroke="#111" fill="none" strokeWidth="1.500" /></svg>
      </button>
      <button type="button" aria-label="Maya" className="flex w-[58px] shrink-0 items-center justify-center border-b-[3px] border-[#1379c4] bg-[#eaf3f7]">
        <Svg size={30} box={30}><path d="M1 1h24v28H1z" fill="#d5e9ea" /><path d="M3 3h6l6 9 5-9h6v18h-6V11l-5 8-6-8v10H3z" fill="#14939a" /><path d="M20 3h6v18h-6z" fill="#0c7178" /><text x="13" y="29" fontSize="5" fontWeight="700" fontFamily="Liberation Sans" fill="#10848b">MAYA</text></Svg>
      </button>
      <button type="button" aria-label="文件资源管理器" className="ml-[9px] flex w-[51px] shrink-0 items-center justify-center border-b-[3px] border-[#1379c4]">
        <Svg size={28} box={28}><path d="M1 3h11l2 3h13v20H1z" fill="#fcd363" /><path d="M1 3h11l2 3H1z" fill="#d39c1c" /><path d="M5 16h18v10h-5v-5h-8v5H5z" fill="#3e8fc6" /></Svg>
      </button>
      <button type="button" aria-label="记事本" className="ml-[11px] flex w-[51px] shrink-0 items-center justify-center border-b-[3px] border-[#1379c4]">
        <Svg size={28} box={28}><path d="M12 2l13-1 2 23-6 4z" fill="#5e5a52" /><path d="M13 3l11-1 1 20-5 5z" fill="#f2f2ee" /><path d="M10 2l13 1-6 21-17-4z" fill="#63aec0" /><path d="M10 2l13 1-2.500 8L6 9z" fill="#a4d3de" /></Svg>
      </button>
      <span className="grow" />
      <div className="flex items-center gap-2.5">
        <Tool label="显示隐藏的图标" className="w-5"><Svg size={18}><path d="M1 12l7-7.500 7 7.500" stroke="#111" strokeWidth="1.300" /></Svg></Tool>
        <Tool label="录屏" className="w-5">
          <Svg size={20}>
            {[0, 60, 120, 180, 240, 300].map((r) => <path key={r} transform={`rotate(${r} 8 8)`} d="M8 6C5.500 3.500 7 .5 10 1c1.500.5 2 2 1.500 3" stroke="#e8707c" strokeWidth="1.300" />)}
            <circle cx="8" cy="8" r="2" fill="#8d9ad2" />
          </Svg>
        </Tool>
        <Tool label="电池" className="w-5"><Svg size={20}><path d="M3 4.500h12v8H3z" stroke="#000" /><path d="M5.500 6H14v5H5.500zM15 7h1v3h-1z" fill="#000" /><path d="M1 2v2M4 2v2M0 4.500h5v2l-2.500 1.500L0 6.500zM2.500 8v5" stroke="#000" fill="#fff" /></Svg></Tool>
        <Tool label="麦克风" className="w-5"><Svg size={22}><rect x="5" y="0" width="6" height="10.500" rx="1.500" fill="#000" /><path d="M3.500 8v3.500h9V8M8 12v3M5 15.500h6" stroke="#000" /></Svg></Tool>
        <Tool label="网络" className="w-5"><Svg size={20}><path d="M4 3h11v9H4M9 12v2.500M6 14.500h7M2.500 9v4M.5 2.500h4v3l-2 2-2-2z" stroke="#000" /></Svg></Tool>
        <Tool label="音量" className="w-5"><Svg size={20}><path d="M1 6h2.500L7 2.500v11L3.500 10H1z" stroke="#000" /><path d="M9 6c1 1.300 1 2.700 0 4M11 4.500c2 2 2 5 0 7" stroke="#000" /><path d="M13 3c3 3 3 7 0 10" stroke="#888" /></Svg></Tool>
        <Tool label="输入法" className="w-5"><Svg size={20}><path d="M2 5h12v6H2zM8 1.500v13" stroke="#222" strokeWidth="2.500" /><path d="M2 5h12v6H2zM8 1.500v13" stroke="#fff" strokeWidth=".8" /></Svg></Tool>
      </div>
      <div className="ml-[17px] w-[50px] shrink-0 overflow-hidden whitespace-nowrap pt-0.5 text-[15px] leading-[23px]">
        <p className="pl-[18px]">9:43</p>
        <p>2023/4</p>
      </div>
    </footer>
  );
}

const menus = ["创建", "选择", "修改", "显示", "窗口", "网格", "编辑网格", "网格工具", "网格显示", "曲线", "曲面", "变形", "UV", "生成", "缓存", "GN Import/Export", "Arnold", "HardMesh", "帮助"];

export default function App() {
  return (
    <div className="flex h-screen flex-col overflow-hidden bg-[#444444] font-['Noto_Sans','Noto_Sans_CJK_SC',sans-serif] text-xs text-[#c8c8c8]">
      <header className="flex h-[29px] shrink-0 items-center justify-between overflow-hidden bg-white pb-0.5 text-[15px] text-black">
        <h1>Autodesk Maya 2020: 无标题</h1>
        <div className="flex">
          <button type="button" aria-label="最小化" className="flex h-7 w-12 items-center justify-center"><span className="h-px w-3 bg-black" /></button>
          <button type="button" aria-label="最大化" className="flex h-7 w-[29px] items-center justify-end"><span className="h-2.5 w-px bg-black" /></button>
        </div>
      </header>
      <div className="flex h-6 shrink-0 items-center justify-between overflow-hidden">
        <nav className="-ml-[9px] flex gap-[15px] whitespace-nowrap">
          {menus.map((m) => <button key={m} type="button" className={/^[A-Z].{4,}/.test(m) ? "px-0.5" : ""}>{m}</button>)}
        </nav>
        <label className="flex shrink-0 items-center gap-2 pt-0.5">
          工作区:
          <select defaultValue="Maya 经典*" className="h-[22px] w-[93px] appearance-none bg-[#5d5d5d] pl-[3px] outline-none"><option>Maya 经典*</option></select>
        </label>
      </div>
      <StatusLine />
      <Shelf />
      <main className="flex min-h-0 grow border-b-2 border-[#383838]">
        <Outliner />
        <div className="mr-[3px] w-[3px] shrink-0 bg-[#3a3a3a]" />
        <Viewport />
        <div className="ml-[3px] mr-1 w-[3px] shrink-0 bg-[#3a3a3a]" />
        <RightPanel />
      </main>
      <Playback />
      <Taskbar />
    </div>
  );
}
